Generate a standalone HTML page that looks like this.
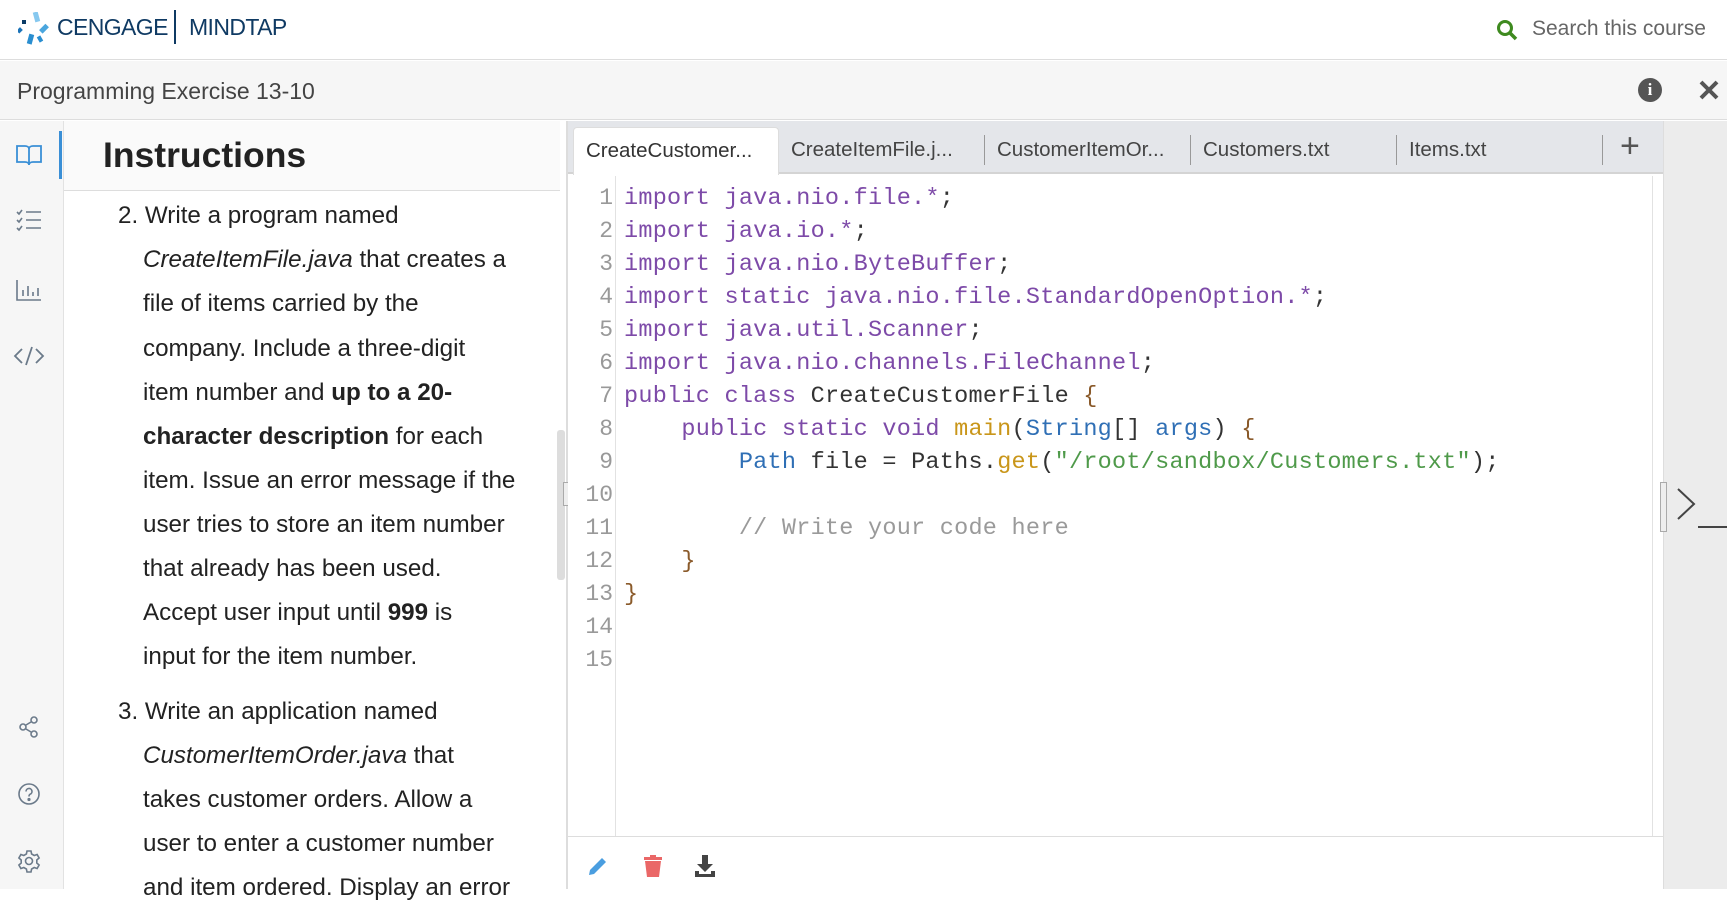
<!DOCTYPE html>
<html><head><meta charset="utf-8"><style>
*{margin:0;padding:0;box-sizing:border-box}
body{width:1727px;height:889px;overflow:hidden;background:#fff;font-family:"Liberation Sans",sans-serif;position:relative;color:#222}
.a{position:absolute}
.code{font-family:"Liberation Mono",monospace;font-size:23.5px;white-space:pre;letter-spacing:0.25px}
.ln{position:absolute;left:569px;width:44px;text-align:right;font-family:"Liberation Mono",monospace;font-size:23px;color:#999}
.cl{position:absolute;left:624px}
.k{color:#7d4aa8}.b{color:#2f6fb5}.g{color:#c9961a}.s{color:#4f9a4a}.c{color:#9a9a9a}.d{color:#333}.p{color:#8a5a2a}
.il{position:absolute;left:143px;font-size:24.2px;color:#222;white-space:nowrap}
.tab{position:absolute;top:127px;height:46px;font-size:20.5px;color:#444;line-height:46px;padding-left:12px;white-space:nowrap}
</style></head><body>
<!-- header -->
<div class="a" style="left:0;top:0;width:1727px;height:60px;border-bottom:1px solid #ddd;background:#fff"></div>
<svg class="a" style="left:18px;top:12px" width="34" height="34" viewBox="0 0 34 34">
<rect x="16" y="0" width="5" height="10" fill="#86c8ef" transform="rotate(-15 18 5)"/>
<rect x="24" y="12" width="5" height="9" fill="#4aa6de" transform="rotate(45 26 16)"/>
<rect x="4" y="8" width="4" height="4" fill="#0b3b66"/>
<rect x="0" y="16" width="4" height="5" fill="#1b73b8" transform="rotate(45 2 18)"/>
<rect x="10" y="22" width="5" height="10" fill="#2a8ed0" transform="rotate(15 12 27)"/>
<rect x="20" y="24" width="4" height="6" fill="#2a8ed0" transform="rotate(-30 22 27)"/>
</svg>
<div class="a" style="left:57px;top:14px;font-size:23px;color:#0f3a63;letter-spacing:-0.6px">CENGAGE</div>
<div class="a" style="left:174px;top:10px;width:2px;height:34px;background:#0f3a63"></div>
<div class="a" style="left:189px;top:14px;font-size:23px;color:#0f3a63;letter-spacing:-0.6px">MINDTAP</div>
<svg class="a" style="left:1496px;top:19px" width="22" height="22" viewBox="0 0 22 22"><circle cx="9" cy="9" r="6.5" fill="none" stroke="#3e8a1f" stroke-width="3"/><line x1="14" y1="14" x2="20" y2="20" stroke="#3e8a1f" stroke-width="3.5"/></svg>
<div class="a" style="left:1532px;top:17px;font-size:21px;color:#666">Search this course</div>
<!-- title bar -->
<div class="a" style="left:0;top:61px;width:1727px;height:59px;background:#f6f6f6;border-bottom:1px solid #ddd"></div>
<div class="a" style="left:17px;top:78px;font-size:23px;color:#444">Programming Exercise 13-10</div>
<div class="a" style="left:1638px;top:78px;width:24px;height:24px;border-radius:50%;background:#555;color:#fff;font-weight:bold;font-size:17px;text-align:center;line-height:24px;font-family:'Liberation Serif',serif">i</div>
<svg class="a" style="left:1698px;top:79px" width="22" height="22"><path d="M3 3L19 19M19 3L3 19" stroke="#555" stroke-width="4"/></svg>
<!-- sidebar -->
<div class="a" style="left:0;top:121px;width:64px;height:768px;background:#f6f6f6;border-right:1px solid #e2e2e2"></div>
<div class="a" style="left:59px;top:131px;width:3px;height:48px;background:#3a8fd6"></div>
<svg class="a" style="left:15px;top:143px" width="28" height="24" viewBox="0 0 28 24"><path d="M2 3h8c2 0 4 1 4 3v16c0-2-2-3-4-3H2zM26 3h-8c-2 0-4 1-4 3v16c0-2 2-3 4-3h8z" fill="none" stroke="#3a8fd6" stroke-width="1.8"/></svg>
<svg class="a" style="left:15px;top:208px" width="28" height="24" viewBox="0 0 28 24" fill="none" stroke="#6b7a8a" stroke-width="1.6"><path d="M2 4l2 2 3-4M2 12l2 2 3-4M2 20l2 2 3-4M11 4h15M11 12h15M11 20h15"/></svg>
<svg class="a" style="left:15px;top:278px" width="28" height="24" viewBox="0 0 28 24" fill="none" stroke="#6b7a8a" stroke-width="1.6"><path d="M2 2v20h24M8 18v-6M13 18v-10M18 18v-4M23 18v-8"/></svg>
<svg class="a" style="left:13px;top:344px" width="32" height="24" viewBox="0 0 32 24" fill="none" stroke="#6b7a8a" stroke-width="1.8"><path d="M9 5L2 12l7 7M23 5l7 7-7 7M19 3l-6 18"/></svg>
<svg class="a" style="left:18px;top:715px" width="22" height="24" viewBox="0 0 22 24" fill="none" stroke="#6b7a8a" stroke-width="1.6"><circle cx="5" cy="12" r="3"/><circle cx="16" cy="5" r="3"/><circle cx="16" cy="19" r="3"/><path d="M8 10l5-3M8 14l5 3"/></svg>
<svg class="a" style="left:17px;top:782px" width="24" height="24" viewBox="0 0 24 24" fill="none" stroke="#6b7a8a" stroke-width="1.6"><circle cx="12" cy="12" r="10"/><path d="M9 9.5a3 3 0 1 1 4 2.8c-1 .5-1 1.2-1 2.2"/><circle cx="12" cy="17.5" r=".8" fill="#6b7a8a"/></svg>
<svg class="a" style="left:17px;top:849px" width="24" height="24" viewBox="0 0 24 24" fill="none" stroke="#6b7a8a" stroke-width="1.6"><circle cx="12" cy="12" r="3.5"/><path d="M10 2h4l.6 3 2.6 1.5 2.9-1 2 3.5-2.3 2v3l2.3 2-2 3.5-2.9-1-2.6 1.5-.6 3h-4l-.6-3-2.6-1.5-2.9 1-2-3.5 2.3-2v-3l-2.3-2 2-3.5 2.9 1 2.6-1.5z"/></svg>
<!-- instructions -->
<div class="a" style="left:64px;top:121px;width:496px;height:70px;background:#fafafa;border-bottom:1px solid #ddd"></div>
<div class="a" style="left:103px;top:135px;font-size:35.5px;font-weight:bold;color:#222">Instructions</div>
<div class="a" style="left:557px;top:430px;width:8px;height:150px;background:#ddd;border-radius:3px"></div>
<div class="il" style="left:118px;top:202px">2. Write a program named</div>
<div class="il" style="top:246px"><i>CreateItemFile.java</i> that creates a</div>
<div class="il" style="top:290px">file of items carried by the</div>
<div class="il" style="top:335px">company. Include a three-digit</div>
<div class="il" style="top:379px">item number and <b>up to a 20-</b></div>
<div class="il" style="top:423px"><b>character description</b> for each</div>
<div class="il" style="top:467px">item. Issue an error message if the</div>
<div class="il" style="top:511px">user tries to store an item number</div>
<div class="il" style="top:555px">that already has been used.</div>
<div class="il" style="top:599px">Accept user input until <b>999</b> is</div>
<div class="il" style="top:643px">input for the item number.</div>
<div class="il" style="left:118px;top:698px">3. Write an application named</div>
<div class="il" style="top:742px"><i>CustomerItemOrder.java</i> that</div>
<div class="il" style="top:786px">takes customer orders. Allow a</div>
<div class="il" style="top:830px">user to enter a customer number</div>
<div class="il" style="top:874px">and item ordered. Display an error</div>
<!-- editor -->
<div class="a" style="left:566px;top:121px;width:2px;height:768px;background:#ddd"></div>
<div class="a" style="left:563px;top:482px;width:7px;height:24px;background:#eee;border:1px solid #aaa"></div>
<div class="a" style="left:568px;top:121px;width:1095px;height:53px;background:#e4e6ea;border-bottom:2px solid #d4d4d4"></div>
<div class="tab" style="left:573px;width:206px;background:#fff;border:1px solid #ddd;border-bottom:none;border-radius:4px 4px 0 0;color:#333;height:48px">CreateCustomer...</div>
<div class="tab" style="left:779px">CreateItemFile.j...</div>
<div class="a" style="left:984px;top:135px;width:1px;height:30px;background:#999"></div>
<div class="tab" style="left:985px">CustomerItemOr...</div>
<div class="a" style="left:1190px;top:135px;width:1px;height:30px;background:#999"></div>
<div class="tab" style="left:1191px">Customers.txt</div>
<div class="a" style="left:1396px;top:135px;width:1px;height:30px;background:#999"></div>
<div class="tab" style="left:1397px">Items.txt</div>
<div class="a" style="left:1602px;top:135px;width:1px;height:30px;background:#999"></div>
<div class="a" style="left:1620px;top:127px;font-size:34px;color:#555;font-weight:300">+</div>
<div class="a" style="left:568px;top:176px;width:1095px;height:660px;background:#fff"></div>
<div class="a" style="left:615px;top:176px;width:1px;height:660px;background:#e2e2e2"></div>
<div class="a" style="left:1652px;top:176px;width:1px;height:660px;background:#e2e2e2"></div>
<div class="a" style="left:1663px;top:121px;width:64px;height:768px;background:#ececec;border-left:1px solid #ddd"></div>
<div class="a" style="left:1660px;top:482px;width:7px;height:50px;background:#eee;border:1px solid #aaa"></div>
<svg class="a" style="left:1676px;top:485px" width="51" height="45"><path d="M2 4l16 15-16 15" fill="none" stroke="#444" stroke-width="2"/><path d="M22 42h29" stroke="#444" stroke-width="2"/></svg>
<div class="a" style="left:568px;top:836px;width:1095px;height:1px;background:#ddd"></div>
<svg class="a" style="left:586px;top:854px" width="24" height="24" viewBox="0 0 24 24"><path d="M3 21l1-5L16 4l4 4L8 20z" fill="#4a9ee0"/></svg>
<svg class="a" style="left:642px;top:854px" width="22" height="24" viewBox="0 0 22 24"><rect x="2" y="3" width="18" height="3" fill="#ea6767"/><rect x="8" y="1" width="6" height="3" fill="#ea6767"/><path d="M3 7h16l-2 16H5z" fill="#ea6767"/></svg>
<svg class="a" style="left:694px;top:854px" width="22" height="24" viewBox="0 0 22 24"><path d="M8 1h6v9h5l-8 8-8-8h5z" fill="#444"/><path d="M1 17h4v3h12v-3h4v6H1z" fill="#444"/></svg>
<!-- code -->
<div class="ln" style="top:185px">1</div><div class="ln" style="top:218px">2</div><div class="ln" style="top:251px">3</div><div class="ln" style="top:284px">4</div><div class="ln" style="top:317px">5</div><div class="ln" style="top:350px">6</div><div class="ln" style="top:383px">7</div><div class="ln" style="top:416px">8</div><div class="ln" style="top:449px">9</div><div class="ln" style="top:482px">10</div><div class="ln" style="top:515px">11</div><div class="ln" style="top:548px">12</div><div class="ln" style="top:581px">13</div><div class="ln" style="top:614px">14</div><div class="ln" style="top:647px">15</div>
<div class="code cl k" style="top:185px">import java.nio.file.*<span class="d">;</span></div>
<div class="code cl k" style="top:218px">import java.io.*<span class="d">;</span></div>
<div class="code cl k" style="top:251px">import java.nio.ByteBuffer<span class="d">;</span></div>
<div class="code cl k" style="top:284px">import static java.nio.file.StandardOpenOption.*<span class="d">;</span></div>
<div class="code cl k" style="top:317px">import java.util.Scanner<span class="d">;</span></div>
<div class="code cl k" style="top:350px">import java.nio.channels.FileChannel<span class="d">;</span></div>
<div class="code cl" style="top:383px"><span class="k">public class</span> <span class="d">CreateCustomerFile</span> <span class="p">{</span></div>
<div class="code cl" style="top:416px">    <span class="k">public static void</span> <span class="g">main</span><span class="d">(</span><span class="b">String</span><span class="d">[]</span> <span class="b">args</span><span class="d">)</span> <span class="p">{</span></div>
<div class="code cl" style="top:449px">        <span class="b">Path</span> <span class="d">file = Paths.</span><span class="g">get</span><span class="d">(</span><span class="s">"/root/sandbox/Customers.txt"</span><span class="d">);</span></div>
<div class="code cl c" style="top:515px">        // Write your code here</div>
<div class="code cl p" style="top:548px">    }</div>
<div class="code cl p" style="top:581px">}</div>
</body></html>
